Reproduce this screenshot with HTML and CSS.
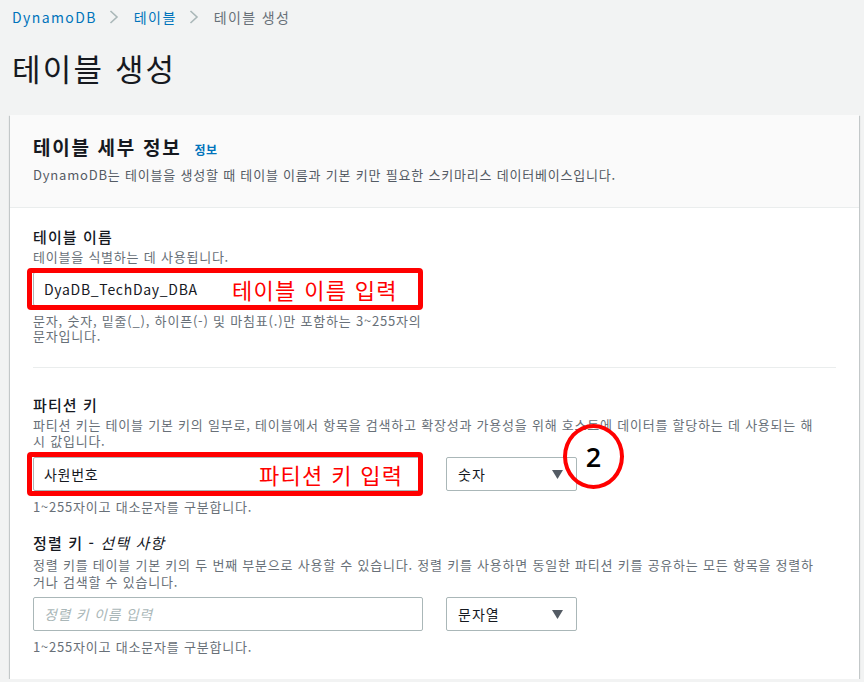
FILE: index.html
```
<!doctype html>
<html lang="ko">
<head>
  <meta charset="utf-8">
  <title>테이블 생성</title>
  <link rel="stylesheet" href="styles.css">
</head>
<body>
  <div class="page">
    <nav class="crumbs">
      <a href="#">DynamoDB</a>
      <svg class="chev" width="10" height="14" viewBox="0 0 10 14"><polyline points="1.5,1 8,7 1.5,13" fill="none" stroke="#aab7b8" stroke-width="1.6"/></svg>
      <a href="#">테이블</a>
      <svg class="chev" width="10" height="14" viewBox="0 0 10 14"><polyline points="1.5,1 8,7 1.5,13" fill="none" stroke="#aab7b8" stroke-width="1.6"/></svg>
      <span class="here">테이블 생성</span>
    </nav>

    <h1 class="page-title">테이블 생성</h1>

    <section class="card">
      <header class="card-head">
        <h2>테이블 세부 정보 <a class="info" href="#">정보</a></h2>
        <p>DynamoDB는 테이블을 생성할 때 테이블 이름과 기본 키만 필요한 스키마리스 데이터베이스입니다.</p>
      </header>

      <div class="card-body">
        <div class="field field-first">
          <label class="label">테이블 이름</label>
          <p class="desc">테이블을 식별하는 데 사용됩니다.</p>
          <div class="control">
            <div class="input-wrap">
              <input class="input" type="text" value="DyaDB_TechDay_DBA">
              <span class="mark"></span>
              <span class="note note-name">테이블 이름 입력</span>
            </div>
          </div>
          <p class="help help-narrow">문자, 숫자, 밑줄(_), 하이픈(-) 및 마침표(.)만 포함하는 3~255자의 문자입니다.</p>
        </div>

        <hr class="divider">

        <div class="field field-key">
          <label class="label">파티션 키</label>
          <p class="desc">파티션 키는 테이블 기본 키의 일부로, 테이블에서 항목을 검색하고 확장성과 가용성을 위해 호스트에 데이터를 할당하는 데 사용되는 해시 값입니다.</p>
          <div class="control">
            <div class="input-wrap">
              <input class="input" type="text" value="사원번호">
              <span class="mark mark-key"></span>
              <span class="note note-key">파티션 키 입력</span>
            </div>
            <div class="select">
              <span>숫자</span>
              <svg width="11" height="9" viewBox="0 0 11 9"><polygon points="0,0 11,0 5.5,9" fill="#545b64"/></svg>
              <span class="step">2</span>
            </div>
          </div>
          <p class="help">1~255자이고 대소문자를 구분합니다.</p>
        </div>

        <div class="field field-sort">
          <label class="label">정렬 키 - <i>선택 사항</i></label>
          <p class="desc">정렬 키를 테이블 기본 키의 두 번째 부분으로 사용할 수 있습니다. 정렬 키를 사용하면 동일한 파티션 키를 공유하는 모든 항목을 정렬하거나 검색할 수 있습니다.</p>
          <div class="control">
            <div class="input-wrap">
              <input class="input" type="text" placeholder="정렬 키 이름 입력">
            </div>
            <div class="select">
              <span>문자열</span>
              <svg width="11" height="9" viewBox="0 0 11 9"><polygon points="0,0 11,0 5.5,9" fill="#545b64"/></svg>
            </div>
          </div>
          <p class="help">1~255자이고 대소문자를 구분합니다.</p>
        </div>
      </div>
    </section>
  </div>
</body>
</html>
```

FILE: styles.css
```
* {
    margin: 0;
    padding: 0;
    box-sizing: border-box;
}
body {
    background: #f2f3f3;
    font-family: "Noto Sans CJK KR", "Noto Sans", sans-serif;
    letter-spacing: 0.05em;
    color: #16191f;
}
.page {
    padding: 0 5px 0 10px;
}
.crumbs {
    display: flex;
    align-items: center;
    padding: 7px 0 0 2px;
    height: 27px;
    font-size: 14px;
    line-height: 20px;
    letter-spacing: 0.1em;
}
.crumbs a {
    color: #0073bb;
    text-decoration: none;
}
.crumbs .here {
    color: #687078;
}
.chev {
    margin: 0 15px 0 12px;
}
.page-title {
    margin-top: 23px;
    padding-left: 2px;
    font-size: 31px;
    line-height: 36px;
    font-weight: 400;
    letter-spacing: 0.07em;
}
.card {
    margin-top: 29px;
    background: #fff;
    box-shadow: 0 1px 1px 0 rgba(0, 28, 36, 0.3), 1px 1px 1px 0 rgba(0, 28, 36, 0.15), -1px 1px 1px 0 rgba(0, 28, 36, 0.15);
}
.card-head {
    background: #fafafa;
    border-bottom: 1px solid #eaeded;
    padding: 20px 23px 24px;
}
.card-head h2 {
    font-size: 19px;
    line-height: 24px;
    font-weight: 700;
    letter-spacing: 0.09em;
}
.card-head .info {
    margin-left: 6px;
    font-size: 12px;
    font-weight: 700;
    letter-spacing: 0.05em;
    color: #0073bb;
    text-decoration: none;
}
.card-head p {
    margin-top: 5px;
    font-size: 13px;
    line-height: 16px;
    color: #545b64;
}
.card-body {
    padding: 0 23px 25px;
}
.field-first {
    padding-top: 19px;
}
.field-key {
    padding-top: 27px;
}
.field-sort {
    padding-top: 19px;
}
.label {
    display: block;
    font-size: 15px;
    line-height: 20px;
    font-weight: 500;
    letter-spacing: 0.075em;
}
.label i {
    font-weight: 400;
}
.desc {
    margin-top: 2px;
    padding-right: 16px;
    font-size: 13px;
    line-height: 16px;
    letter-spacing: 0.06em;
    color: #687078;
}
.field-sort .desc {
    margin-top: 3px;
    line-height: 17px;
}
.control {
    display: flex;
    gap: 23px;
    margin-top: 7px;
}
.field-key .control {
    margin-top: 8px;
}
.input-wrap {
    position: relative;
    width: 390px;
}
.input {
    display: block;
    width: 100%;
    height: 34px;
    padding: 0 10px;
    border: 1px solid #aab7b8;
    border-radius: 2px;
    background: #fff;
    font-family: inherit;
    font-size: 14px;
    letter-spacing: 0.05em;
    color: #16191f;
    outline: none;
}
.input::placeholder {
    color: #aab7b8;
    font-style: italic;
}
.mark {
    position: absolute;
    left: -6px;
    right: 0;
    top: -4px;
    bottom: -4px;
    border: 5px solid #ff0000;
    border-radius: 4px;
}
.mark-key {
    top: -5px;
    bottom: -5px;
}
.note {
    position: absolute;
    top: 50%;
    transform: translateY(-50%);
    font-size: 22px;
    line-height: 28px;
    letter-spacing: 0.06em;
    color: #ff0000;
}
.note-name {
    left: 199px;
}
.note-key {
    left: 226px;
}
.select {
    position: relative;
    display: flex;
    align-items: center;
    justify-content: space-between;
    width: 131px;
    height: 34px;
    padding: 0 13px 0 11px;
    border: 1px solid #aab7b8;
    border-radius: 2px;
    background: #fff;
    font-size: 14px;
    letter-spacing: 0.075em;
}
.step {
    position: absolute;
    left: 116px;
    top: -34px;
    width: 61px;
    height: 65px;
    border: 4px solid #ff0000;
    border-radius: 50%;
    display: flex;
    align-items: center;
    justify-content: center;
    font-family: "Open Sans", sans-serif;
    font-size: 27px;
    font-weight: 600;
    letter-spacing: 0;
    color: #000;
}
.help {
    margin-top: 7px;
    font-size: 13px;
    line-height: 15px;
    color: #687078;
}
.field-key .help,
.field-sort .help {
    margin-top: 8px;
}
.help-narrow {
    width: 390px;
}
.divider {
    margin-top: 24px;
    border: 0;
    border-top: 1px solid #eaeded;
}
```
